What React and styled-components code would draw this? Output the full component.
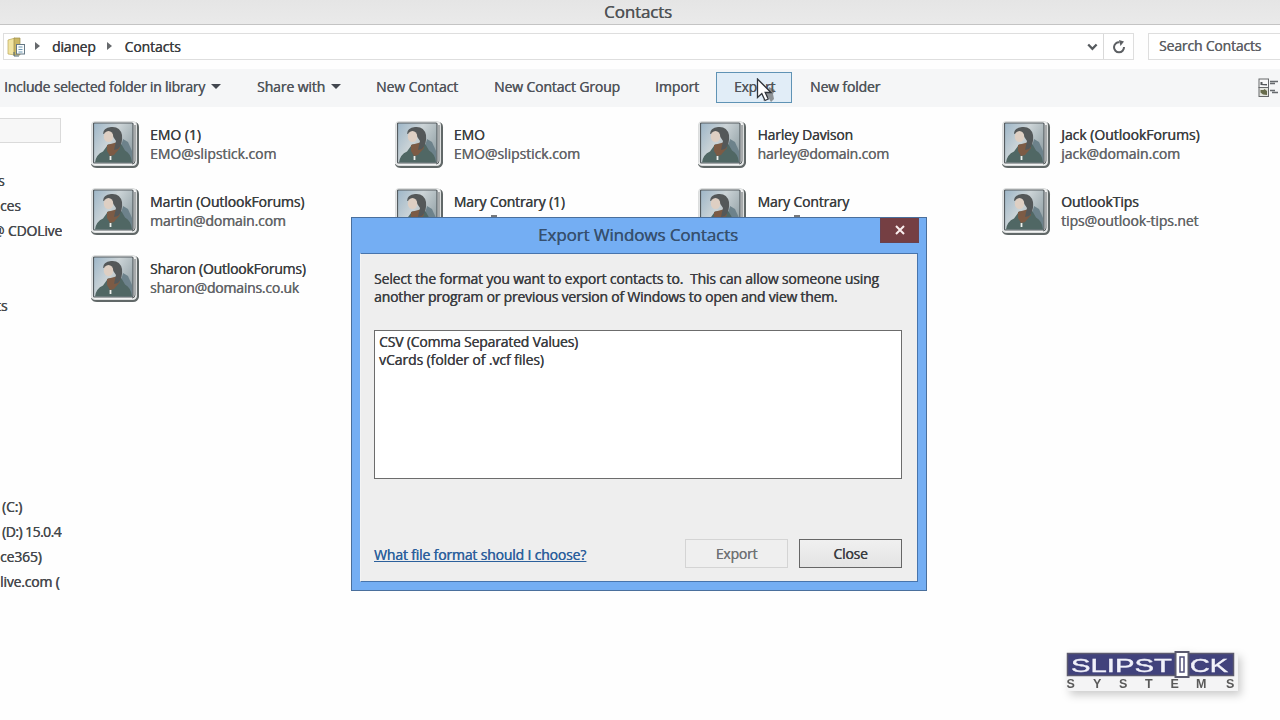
import React from 'react';
import styled, { createGlobalStyle } from 'styled-components';

const toolbarItems = [
    { label: 'Include selected folder in library', left: 4, width: 257, track: -0.24, arrow: true },
    { label: 'Share with', left: 0, width: 119, track: -0.12, arrow: true },
    { label: 'New Contact', left: 0, width: 118, track: -0.11 },
    { label: 'New Contact Group', left: 0, width: 161, track: -0.14 },
    { label: 'Import', left: 0, width: 61, track: -0.1 },
];

const folders = [
    { label: '' },
    { label: '' },
    { label: 's', shift: -2 },
    { label: 'ces', shift: 0 },
    { label: '@ CDOLive', shift: -8 },
    { label: '' },
    { label: '' },
    { label: 'ts', shift: -4 },
    { label: '' },
    { label: '' },
    { label: '' },
    { label: '' },
    { label: '' },
    { label: '' },
    { label: '' },
    { label: '(C:)', shift: 2 },
    { label: '(D:) 15.0.4', shift: 2, track: -0.55 },
    { label: 'ce365)', shift: 0 },
    { label: 'live.com (', shift: 0 },
];

const contacts = [
    { name: 'EMO (1)', mail: 'EMO@slipstick.com', track: -0.05 },
    { name: 'EMO', mail: 'EMO@slipstick.com', track: -0.05 },
    { name: 'Harley Davison', mail: 'harley@domain.com', track: -0.18 },
    { name: 'Jack (OutlookForums)', mail: 'jack@domain.com', track: -0.04 },
    { name: 'Martin (OutlookForums)', mail: 'martin@domain.com', track: -0.12 },
    { name: 'Mary Contrary (1)', track: -0.16 },
    { name: 'Mary Contrary', track: -0.16 },
    { name: 'OutlookTips', mail: 'tips@outlook-tips.net', track: -0.1 },
    { name: 'Sharon (OutlookForums)', mail: 'sharon@domains.co.uk', track: -0.22 },
];

const ContactIcon = () => (
    <svg width="50" height="50" viewBox="0 0 50 50">
        <defs>
            <linearGradient id="sky" x1="0" y1="0" x2="1" y2="0.6">
                <stop offset="0" stopColor="#9db6c8" />
                <stop offset="0.5" stopColor="#ccd4d7" />
                <stop offset="1" stopColor="#97a5aa" />
            </linearGradient>
        </defs>
        <path d="M44 1.500h1.500q2.500 1 2.500 5V42q-1 5-6 5H6q-4.500 0-6-3.500z" fill="#616868" />
        <rect x="0.500" y="0.500" width="45" height="44" rx="3.500" fill="#f3f4f4" stroke="#dcdede" />
        <path d="M44 4v36q0 3-3 3" fill="none" stroke="#5c6364" strokeWidth="1" />
        <rect x="2.500" y="2" width="39.500" height="40" rx="1" fill="url(#sky)" stroke="#545b5f" strokeWidth="1.200" />
        <path d="M32 18l5 3 4 9v11H26z" fill="#6d828b" />
        <path d="M4 41.500q1-8 8-11l5-7 13-1 4 7q6 3 7 12z" fill="#506764" />
        <path d="M16 24l11-3 2 6-6 7-4 1-3-5z" fill="#7c5b45" />
        <path d="M12 13q0-6 8-7 9-1 11 8 1 9-4 14l-4 1 2-9-6-9z" fill="#545859" />
        <ellipse cx="17.500" cy="15.500" rx="4.700" ry="5.500" fill="#decfc3" />
        <path d="M19.500 35v4" stroke="#eef0ec" strokeWidth="1.800" />
    </svg>
);

const FolderIcon = () => (
    <svg width="19" height="20" viewBox="0 0 19 20">
        <path d="M1 3l7-2v17l-7-1z" fill="#f1e4a2" stroke="#b9a659" strokeWidth="0.700" />
        <path d="M7 1h6v17H7z" fill="#cbb765" stroke="#9b8c4c" strokeWidth="0.700" />
        <rect x="9.500" y="7.500" width="8" height="9.500" fill="#fafcfd" stroke="#657885" />
        <path d="M11.500 10h4M11.500 12.500h4M11.500 15h4" stroke="#6d98b3" />
        <path d="M7 15v4h5" stroke="#536973" fill="none" />
    </svg>
);

const CursorIcon = () => (
    <svg width="22" height="28" viewBox="0 0 22 28">
        <path d="M7 23l5-4 3 5 3-3-1-5 2-4-6-3z" fill="#555" opacity="0.600" />
        <path d="M1.500 1v18.500l4.300-4 3.200 7 3.200-1.500-3-6.500h5.800z" fill="#fff" stroke="#30343a" strokeWidth="1.300" />
    </svg>
);

const App = () => {
    return (
        <Wrapper>
            <GlobalStyle />
            <TitleBar>Contacts</TitleBar>
            <AddressRow>
                <AddressBox>
                    <FolderIcon />
                    <Crumb $gap={9} $track={-0.24}>
                        <CrumbArrow />
                        dianep
                    </Crumb>
                    <Crumb $gap={12} $track={-0.1}>
                        <CrumbArrow />
                        Contacts
                    </Crumb>
                    <AddressChevron width="11" height="8" viewBox="0 0 11 8">
                        <path d="M1.200 1.500l4.200 4.300 4.200-4.300" fill="none" stroke="#565a5e" strokeWidth="2.300" />
                    </AddressChevron>
                    <Refresh>
                        <svg width="14" height="14" viewBox="0 0 14 14">
                            <path d="M7.500 2.300A5 5 0 1 0 12 7" fill="none" stroke="#5c5f63" strokeWidth="2" />
                            <path d="M7 0l5 1.500L8.500 6z" fill="#5c5f63" />
                        </svg>
                    </Refresh>
                </AddressBox>
                <SearchBox>Search Contacts</SearchBox>
            </AddressRow>

            <Toolbar>
                {toolbarItems.map((item) => (
                    <ToolItem key={item.label} $left={item.left} $width={item.width} $track={item.track}>
                        {item.label}
                        {item.arrow && <DropArrow />}
                    </ToolItem>
                ))}
                <ExportTool>Export</ExportTool>
                <ToolItem $left={18} $width={400} $track={-0.16}>New folder</ToolItem>
                <ViewIcon width="22" height="20" viewBox="0 0 22 20">
                    <rect x="1" y="1" width="9.500" height="8.500" fill="#f8f8f8" stroke="#66686a" />
                    <path d="M2.500 7V4h2v2h4.500v1.500z" fill="#55585b" />
                    <rect x="1" y="9.500" width="9.500" height="9" fill="#e4e5df" stroke="#66686a" />
                    <path d="M2.500 12h3l1-1 2.500 2v4l-4-.5-2.500-2z" fill="#686c4c" />
                    <path d="M12 3.500h8M12 5.500h5M12 12.500h5M14 14.500h6" stroke="#666a6e" strokeWidth="1.500" />
                </ViewIcon>
            </Toolbar>

            <Content>
                <Sidebar>
                    {folders.map((folder, i) => (
                        <Folder key={i} $selected={i === 0} $shift={folder.shift} $track={folder.track}>{folder.label}</Folder>
                    ))}
                </Sidebar>
                <ContactGrid>
                    {contacts.map((contact, i) => (
                        <Contact key={i}>
                            <ContactIcon />
                            <ContactText $track={contact.track}>
                                <Name>{contact.name}</Name>
                                {contact.mail ? <Mail>{contact.mail}</Mail> : <MailEdge />}
                            </ContactText>
                        </Contact>
                    ))}
                </ContactGrid>
            </Content>

            <Dialog>
                <DialogTitle>
                    Export Windows Contacts
                    <CloseBox>
                        <svg width="10" height="10" viewBox="0 0 10 10">
                            <path d="M1 1l8 8M9 1L1 9" stroke="#fbeeee" strokeWidth="2" />
                        </svg>
                    </CloseBox>
                </DialogTitle>
                <DialogBody>
                    <DialogText $track={-0.187}>Select the format you want to export contacts to.&nbsp; This can allow someone using</DialogText>
                    <DialogText $track={-0.225}>another program or previous version of Windows to open and view them.</DialogText>
                    <FormatList>
                        <DialogText $track={-0.2}>CSV (Comma Separated Values)</DialogText>
                        <DialogText $track={-0.1}>vCards (folder of .vcf files)</DialogText>
                    </FormatList>
                    <DialogFooter>
                        <HelpLink>What file format should I choose?</HelpLink>
                        <DialogButton $disabled>Export</DialogButton>
                        <DialogButton>Close</DialogButton>
                    </DialogFooter>
                </DialogBody>
            </Dialog>

            <Cursor>
                <CursorIcon />
            </Cursor>

            <Logo width="180" height="54" viewBox="0 0 180 54">
                <rect x="1" y="5" width="171" height="38" fill="#f4f4f5" />
                <rect x="1.500" y="5.500" width="166" height="22" fill="#41427c" stroke="#5b5a6e" strokeWidth="1.500" />
                <text x="5" y="23.500" fontSize="19" textLength="101" lengthAdjust="spacingAndGlyphs" fill="#f1f1fa" stroke="#f1f1fa" strokeWidth="0.400">SLIPST</text>
                <text x="124" y="23.500" fontSize="19" textLength="38" lengthAdjust="spacingAndGlyphs" fill="#f1f1fa" stroke="#f1f1fa" strokeWidth="0.400">CK</text>
                <rect x="109.500" y="4" width="13" height="25" fill="#fff" stroke="#5b5a6e" strokeWidth="2" />
                <rect x="114" y="9" width="4" height="15" fill="#fff" stroke="#504f78" strokeWidth="1.500" />
                <LetterRow x="0.5 27 53 79 104.500 130 160" y="39.500">SYSTEMS</LetterRow>
            </Logo>
        </Wrapper>
    );
};

export default App;

const GlobalStyle = createGlobalStyle`
    body {
        margin: 0;
        overflow: hidden;
    }

    * {
        box-sizing: border-box;
    }
`;

const Wrapper = styled.div`
    position: relative;
    display: flex;
    flex-direction: column;
    width: 1280px;
    height: 720px;
    overflow: hidden;

    background: #fefefe;
    color: #45484c;
    font-family: "Open Sans", "Noto Sans", sans-serif;
    font-size: 14px;
    line-height: 19px;
    white-space: nowrap;
    text-shadow: 0.35px 0 0 currentColor;
`;

const TitleBar = styled.div`
    display: flex;
    justify-content: center;
    flex-shrink: 0;
    height: 25px;
    padding-right: 4px;

    background: linear-gradient(#e5e5e5, #eaeaea);
    border-bottom: 1px solid #c4c4c4;
    color: #505356;
    font-size: 17px;
    line-height: 24px;
    letter-spacing: -0.15px;
`;

const AddressRow = styled.div`
    display: flex;
    flex-shrink: 0;
    gap: 14px;
    height: 44px;
    padding: 8px 0 0 3px;
`;

const AddressBox = styled.div`
    display: flex;
    align-items: center;
    width: 1131px;
    height: 27px;
    padding-left: 3px;

    border: 1px solid #dedede;
    background: #fff;
`;

const Crumb = styled.div`
    display: flex;
    align-items: center;
    gap: 12px;
    margin-left: ${({ $gap }) => $gap}px;
    padding-bottom: 1px;

    color: #3a3d41;
    letter-spacing: ${({ $track }) => $track}px;
`;

const CrumbArrow = styled.span`
    border: 4.5px solid transparent;
    border-left: 5px solid #66696c;
    border-right: 0;
`;

const AddressChevron = styled.svg`
    margin-left: auto;
    margin-right: 5px;
`;

const Refresh = styled.div`
    display: flex;
    align-items: center;
    justify-content: center;
    width: 30px;
    height: 25px;

    border-left: 1px solid #d9d9d9;
`;

const SearchBox = styled.div`
    flex: 1;
    height: 27px;
    padding: 2px 10px;

    border: 1px solid #dedede;
    border-right: 0;
    background: #fff;
    color: #5d6064;
    letter-spacing: -0.19px;
`;

const Toolbar = styled.div`
    display: flex;
    align-items: center;
    flex-shrink: 0;
    height: 38px;

    background: #f5f6f7;
    color: #50545a;
`;

const ToolItem = styled.div`
    display: flex;
    align-items: center;
    flex-shrink: 0;
    gap: 6px;
    width: ${({ $width }) => $width}px;
    padding-left: ${({ $left }) => $left}px;
    padding-bottom: 3px;

    letter-spacing: ${({ $track }) => $track}px;
`;

const DropArrow = styled.span`
    border: 5px solid transparent;
    border-top: 5px solid #43474f;
    border-bottom: 0;
`;

const ExportTool = styled.div`
    flex-shrink: 0;
    width: 76px;
    height: 31px;
    margin-bottom: 1px;
    padding-left: 17px;

    border: 1px solid #5f93b5;
    background: #e1edf7;
    line-height: 28px;
    letter-spacing: -0.3px;
`;

const ViewIcon = styled.svg`
    margin-bottom: 1px;
    margin-left: auto;
`;

const Content = styled.div`
    display: flex;
    flex: 1;
`;

const Sidebar = styled.div`
    flex-shrink: 0;
    width: 62px;
    padding-top: 10.5px;
    overflow: hidden;
`;

const Folder = styled.div`
    width: 61px;
    height: 25.1px;
    border: 1px solid ${({ $selected }) => ($selected ? '#dadada' : 'transparent')};
    border-left: 0;
    background: ${({ $selected }) => ($selected ? '#f7f7f7' : 'none')};
    line-height: 24px;
    letter-spacing: ${({ $track }) => $track || -0.2}px;
    text-indent: ${({ $shift }) => $shift || 0}px;
`;

const ContactGrid = styled.div`
    display: grid;
    grid-template-columns: repeat(4, 303.7px);
    grid-auto-rows: 67px;
    padding: 14px 0 0 29px;
`;

const Contact = styled.div`
    display: flex;
    gap: 9px;
`;

const ContactText = styled.div`
    padding-top: 4px;
    letter-spacing: ${({ $track }) => $track}px;
`;

const Name = styled.div`
    color: #3a3d40;
`;

const Mail = styled.div`
    color: #626467;
`;

/* only the upper edge of the address shows above the dialog */
const MailEdge = styled.div`
    width: 6px;
    height: 2px;
    margin: 4px 0 0 37px;

    background: #77797b;
`;

const Dialog = styled.div`
    position: absolute;
    left: 351px;
    top: 217px;
    display: flex;
    flex-direction: column;
    width: 576px;
    height: 374px;
    padding: 0 8px 8px;

    border: 1px solid #4a6f9c;
    background: #74aef3;
`;

const DialogTitle = styled.div`
    position: relative;
    flex-shrink: 0;
    height: 35px;
    padding-right: 2px;

    color: #36506f;
    font-size: 17px;
    line-height: 34px;
    letter-spacing: -0.1px;
    text-align: center;
`;

const CloseBox = styled.div`
    position: absolute;
    top: 0;
    right: -1px;
    display: flex;
    align-items: center;
    justify-content: center;
    width: 39px;
    height: 25px;

    background: #753f43;
    border: 1px solid #69424f;
    border-top: 0;
`;

const DialogBody = styled.div`
    flex: 1;
    padding: 16px 16px 0 13px;

    border: 1px solid #4774ac;
    border-left-color: #f4f4f4;
    background: #eee;
    color: #3a3c40;
`;

const DialogText = styled.div`
    height: 18px;
    line-height: 18px;
    letter-spacing: ${({ $track }) => $track}px;
`;

const FormatList = styled.div`
    width: 528px;
    height: 149px;
    margin-top: 24px;
    padding: 2px 4px;

    border: 1px solid #6c6c6c;
    background: #fff;
`;

const DialogFooter = styled.div`
    display: flex;
    align-items: center;
    gap: 11px;
    width: 528px;
    height: 29px;
    margin-top: 60px;
`;

const HelpLink = styled.span`
    margin-right: auto;
    padding-top: 2px;
    color: #2c609c;
    letter-spacing: -0.17px;
    text-decoration: underline;
`;

const DialogButton = styled.div`
    width: 103px;
    height: 29px;

    border: 1px solid ${({ $disabled }) => ($disabled ? '#d4d4d4' : '#666')};
    background: ${({ $disabled }) => ($disabled ? '#efefef' : 'linear-gradient(#f0f0f0, #e4e4e4)')};
    color: ${({ $disabled }) => ($disabled ? '#707274' : '#3a3c3f')};
    line-height: 27px;
    letter-spacing: -0.2px;
    text-align: center;
`;

const Cursor = styled.div`
    position: absolute;
    left: 756px;
    top: 78px;
`;

const Logo = styled.svg`
    position: absolute;
    left: 1066px;
    top: 648px;
    overflow: visible;

    font-family: "Liberation Sans", Arial, sans-serif;
    filter: drop-shadow(3px 4px 4px rgba(0, 0, 0, 0.2));
    text-shadow: none;
`;

const LetterRow = styled.text`
    fill: #5a5a5a;
    font-size: 12.5px;
    font-weight: 700;
`;
